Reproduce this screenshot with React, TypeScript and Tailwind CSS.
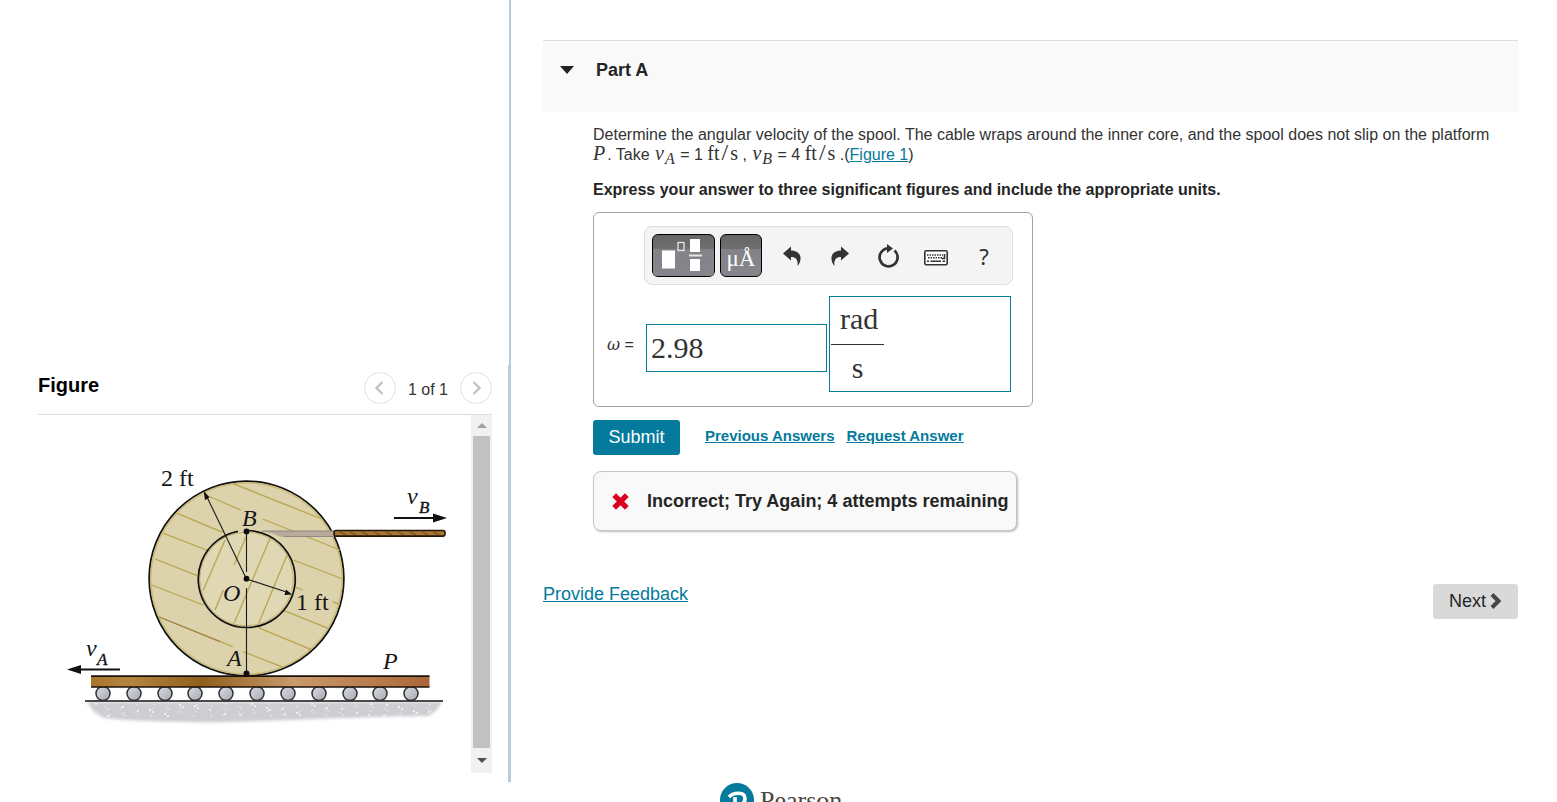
import { useState } from 'react';
import type { ReactNode } from 'react';

const hatchOuter = [
  [280, 86, 545, 192], [205, 123, 302, 165], [112, 175, 248, 232], [70, 235, 208, 288],
  [45, 312, 172, 362], [35, 390, 190, 450], [58, 486, 278, 575], [368, 192, 600, 285],
  [460, 315, 608, 372], [578, 440, 600, 448], [468, 397, 488, 405], [432, 467, 565, 520],
  [355, 518, 512, 583], [310, 590, 430, 637],
];

const hatchInner = [
  [255, 255, 190, 405], [318, 245, 282, 330], [392, 245, 283, 503],
  [442, 298, 357, 503], [250, 405, 225, 465],
];

const wheels = [103, 134, 165, 195, 226, 257, 288, 319, 350, 380, 411];

const specks = Array.from({ length: 110 }, (_, i) => [
  96 + ((i * 73) % 336),
  704 + ((i * 5 + Math.floor(i / 7) * 3) % 13),
  i % 3 === 0 ? 1.1 : 0.7,
]);

function SpoolFigure() {
  return (
    <svg viewBox="38 415 433 358" className="w-full" role="img" aria-label="Spool on a moving platform">
      <defs>
        <linearGradient id="wood" x1="0" x2="1" y1="0" y2="0">
          <stop offset="0" stopColor="#a9752f" />
          <stop offset="0.12" stopColor="#b5853f" />
          <stop offset="0.33" stopColor="#8f5f1c" />
          <stop offset="0.6" stopColor="#c99a6c" />
          <stop offset="0.85" stopColor="#b87a4b" />
          <stop offset="1" stopColor="#a9653a" />
        </linearGradient>
        <linearGradient id="wheel" x1="0" x2="1" y1="0" y2="1">
          <stop offset="0" stopColor="#d9dce1" />
          <stop offset="1" stopColor="#a7abb2" />
        </linearGradient>
        <filter id="soft" x="-5%" y="-20%" width="110%" height="140%">
          <feGaussianBlur stdDeviation="1.6" />
        </filter>
      </defs>

      <path d="M87 702H442L436 711L428 716C380 716 300 720 230 722C170 723 120 720 104 718L94 712Z" fill="#cdced2" filter="url(#soft)" />
      <rect x="80" y="694" width="370" height="7" fill="#fff" />
      {specks.map(([x, y, r], i) => <circle key={i} cx={x} cy={y} r={r} fill="#f7f7f8" />)}
      <path d="M85 701H443" stroke="#111" strokeWidth="1.6" />
      {wheels.map((x) => (
        <circle key={x} cx={x} cy="693.5" r="7" fill="url(#wheel)" stroke="#2f3136" strokeWidth="1.5" />
      ))}

      <circle cx="246.5" cy="578.5" r="97.4" fill="#dcd2ab" stroke="#111" strokeWidth="1.7" />
      <circle cx="246.5" cy="578.5" r="95.6" fill="none" stroke="#c9bb77" strokeWidth="1.4" />
      <circle cx="246.5" cy="579" r="48.5" fill="#e0d7b5" />
      <circle cx="246.5" cy="579" r="46.8" fill="none" stroke="#c0b26c" strokeWidth="1" />
      <g transform="translate(140 455) scale(0.33333)" stroke="#b9a64f" strokeWidth="4">
        {[...hatchOuter, ...hatchInner].map(([a, b, c, d]) => (
          <path key={`${a}-${b}`} d={`M${a} ${b}L${c} ${d}`} />
        ))}
      </g>
      <path d="M58 486L240 560" transform="translate(140 455) scale(0.33333)" stroke="#a5854f" strokeWidth="4" />

      <path d="M262 531H334V537H281C275 534 268 532 262 531Z" fill="#b9ab9b" />
      <path d="M262 531H334M284 536.5H334" stroke="#8e8a83" strokeWidth="1" fill="none" />
      <path d="M238 531.3A48.5 48.5 0 1 0 246.5 530.5" fill="none" stroke="#111" strokeWidth="1.7" />
      <rect x="334" y="530.5" width="111" height="5.6" rx="2" fill="#a87634" stroke="#24170a" strokeWidth="1.6" />
      <path d="M340 532L346 535M350 532L356 535M362 532L368 535M374 532L380 535M386 532L392 535M398 532L404 535M410 532L416 535M422 532L428 535M433 532L439 535" stroke="#6b451a" strokeWidth="1" />

      <rect x="91" y="676" width="338.5" height="11" fill="url(#wood)" />
      <path d="M91 676.2H429.5M91 687H429.5" stroke="#1c120a" strokeWidth="1.7" />

      <path d="M246.5 531V572M246.5 588V673M246.5 579L206 495M246.5 579L288 592.5" stroke="#1a1a1a" strokeWidth="1.1" />
      <path d="M203.500 490.500L209.500 497.500L205 500ZM292 594.500L284.500 595L286 589.500Z" fill="#111" />
      <circle cx="246.500" cy="531.500" r="2.900" fill="#0c0c0c" />
      <circle cx="246.500" cy="578.700" r="2.900" fill="#0c0c0c" />
      <circle cx="246.500" cy="673.500" r="3" fill="#0c0c0c" />

      <path d="M120 669.500H78M394 518H436" stroke="#111" strokeWidth="2" />
      <path d="M67 669.500L81 665V674ZM447 518L433 513.500V522.500Z" fill="#111" />

      <g fill="#151515" fontFamily="Liberation Serif, serif" fontSize="24">
        <text x="161" y="486">2 ft</text>
        <text x="296" y="610">1 ft</text>
        <g fontStyle="italic">
          <text x="242" y="526">B</text>
          <text x="223" y="601">O</text>
          <text x="227" y="666">A</text>
          <text x="383" y="669">P</text>
          <text x="407" y="504">v</text>
          <text x="86" y="656">v</text>
          <g fontSize="17" stroke="#151515" strokeWidth="0.4">
            <text x="419" y="513">B</text>
            <text x="97" y="665">A</text>
          </g>
        </g>
      </g>
    </svg>
  );
}

function RoundButton({ label, path }: { label: string; path: string }) {
  return (
    <button aria-label={label} className="flex size-8 items-center justify-center rounded-full border border-[#e3e3e3] bg-white">
      <svg viewBox="0 0 16 16" className="size-4" fill="none" stroke="#c3c3c3" strokeWidth="2.4">
        <path d={path} />
      </svg>
    </button>
  );
}

function FigurePanel() {
  return (
    <section className="flex min-h-0 flex-1 flex-col border-r-3 border-[#b6cbdc] pr-4 pb-[9px] pl-[38px]">
      <header className="flex h-[50px] shrink-0 items-center justify-between border-b border-[#ddd]">
        <h2 className="pb-[10px] text-[20px] leading-6 font-bold text-black">Figure</h2>
        <div className="flex items-center gap-3 pb-[3px]">
          <RoundButton label="Previous figure" path="M10.500 2L4.500 8L10.500 14" />
          <span className="pt-1 text-base leading-5">1 of 1</span>
          <RoundButton label="Next figure" path="M5.500 2L11.500 8L5.500 14" />
        </div>
      </header>
      <div className="flex min-h-0 flex-1">
        <div className="min-w-0 flex-1 overflow-hidden">
          <SpoolFigure />
        </div>
        <div className="flex w-[21px] shrink-0 flex-col bg-[#f1f1f1] px-[2px]">
          <button aria-label="Scroll up" className="flex h-[21px] items-center justify-center">
            <svg viewBox="0 0 10 5" className="h-[5px] w-[10px]"><path d="M0 5L5 0L10 5Z" fill="#a0a0a0" /></svg>
          </button>
          <div className="flex-1 bg-[#c1c1c1]" />
          <button aria-label="Scroll down" className="flex h-[25px] items-center justify-center">
            <svg viewBox="0 0 10 5" className="h-[5px] w-[10px]"><path d="M0 0H10L5 5Z" fill="#4f4f4f" /></svg>
          </button>
        </div>
      </div>
    </section>
  );
}

function ToolIcon({ label, children }: { label: string; children: ReactNode }) {
  return (
    <button aria-label={label} className="flex h-[43px] w-12 items-center justify-center text-[#333]">
      {children}
    </button>
  );
}

function Toolbar() {
  const dark = 'flex h-[43px] items-center justify-center rounded-md border border-black bg-linear-to-b from-[#666] from-0% via-[#6f6f6f] via-34% to-[#77777b] to-100%';
  return (
    <div role="toolbar" aria-label="Answer tools" className="ml-[50px] flex h-[59px] w-[369px] items-center rounded-lg border border-[#ddd] bg-[#f4f4f4] pl-[7px]">
      <button aria-label="Templates" className={`${dark} w-[63px]`}>
        <svg viewBox="0 0 61 41" className="h-[41px] w-[61px]">
          <rect y="14" width="61" height="27" fill="#8f8f98" opacity=".6" />
          <rect x="9" y="15.500" width="13" height="18" fill="#fff" />
          <rect x="25" y="7.500" width="6" height="8" fill="none" stroke="#e8e8e8" strokeWidth="1.300" />
          <rect x="37" y="4" width="10" height="13" fill="#fff" />
          <rect x="36" y="19.500" width="13" height="2" fill="#e6e6e6" />
          <rect x="37" y="24" width="10" height="12" fill="#fff" />
        </svg>
      </button>
      <button aria-label="Units" className={`${dark} ml-[5px] w-[42px] overflow-hidden`}>
        <span className="flex h-full w-full flex-col bg-linear-to-b from-transparent from-34% to-[#8f8f98]/60 to-34% pt-2 text-center font-['Liberation_Serif',serif] text-[23px] leading-8 text-white">μÅ</span>
      </button>
      <div className="ml-[6px] flex">
        <ToolIcon label="Undo">
          <svg viewBox="0 0 18 20" className="h-5 w-[18px]" fill="currentColor">
            <path d="M0 7.500L8 .5V4.500C14.500 4.500 18 8.500 17.500 13C17.300 16 16 18.500 14.500 20C15.300 14.500 13.500 11 8 11V14.500Z" />
          </svg>
        </ToolIcon>
        <ToolIcon label="Redo">
          <svg viewBox="0 0 18 20" className="h-5 w-[18px]" fill="currentColor">
            <path d="M18 7.500L10 .5V4.500C3.500 4.500 0 8.500 .5 13C.7 16 2 18.500 3.500 20C2.700 14.500 4.500 11 10 11V14.500Z" />
          </svg>
        </ToolIcon>
        <ToolIcon label="Reset">
          <svg viewBox="0 0 22 24" className="h-6 w-[22px]">
            <path d="M11.500 4.300A9 9 0 1 0 17.500 6.500" fill="none" stroke="currentColor" strokeWidth="2.700" />
            <path d="M10 0L16 4.500L10 9Z" fill="currentColor" />
          </svg>
        </ToolIcon>
        <ToolIcon label="Keyboard shortcuts">
          <svg viewBox="0 0 24 16" className="mt-1 h-4 w-6">
            <rect x=".8" y=".8" width="22.400" height="14" rx="1.500" fill="#fff" stroke="currentColor" strokeWidth="1.600" />
            <path d="M3 5H19M4 7.800H19" stroke="currentColor" strokeWidth="1.500" strokeDasharray="1.500 1" />
            <path d="M20.500 4V8.500H17.500M3 11.300H5M6.500 11.300H17M18.500 11.300H21" stroke="currentColor" strokeWidth="1.600" fill="none" />
          </svg>
        </ToolIcon>
        <ToolIcon label="Help"><span className="font-['Noto_Sans',sans-serif] text-[22px] leading-6">?</span></ToolIcon>
      </div>
    </div>
  );
}

function AnswerBox() {
  const [value, setValue] = useState('2.98');
  const [top, setTop] = useState('rad');
  const [bottom, setBottom] = useState('s');
  return (
    <div className="mt-3 h-[195px] w-[440px] rounded-md border border-[#a2a2a2] pt-[13px]">
      <Toolbar />
      <div className="mt-[11px] flex items-end pl-[13px] font-['Liberation_Serif',serif] text-[30px] text-[#333]">
        <label htmlFor="omega" className="mb-[37px] w-[39px] font-['Liberation_Sans',Arial,sans-serif] text-base leading-5">
          <i className="font-['DejaVu_Serif',serif]">ω</i> =
        </label>
        <input id="omega" value={value} onChange={(e) => setValue(e.target.value)} className="mb-5 h-12 w-[181px] border border-[#047a9c] px-1 outline-none" />
        <div role="group" aria-label="Units" className="ml-[2px] flex h-24 w-[182px] flex-col border border-[#047a9c] pl-px">
          <input aria-label="Unit numerator" value={top} onChange={(e) => setTop(e.target.value)} className="h-[47px] w-[53px] pb-1 pl-[9px] outline-none" />
          <div className="h-px w-[53px] bg-[#333]" />
          <input aria-label="Unit denominator" value={bottom} onChange={(e) => setBottom(e.target.value)} className="h-[46px] w-[53px] text-center outline-none" />
        </div>
      </div>
    </div>
  );
}

function Rate({ sub, value }: { sub: string; value: string }) {
  return (
    <>
      <span className="mx-px font-['Liberation_Serif',serif] text-[20px] leading-0 italic">v<span className="inline-block translate-y-1 pl-px text-[16px] leading-0">{sub}</span></span>
      {' '}= {value}{' '}
      <span className="font-['Liberation_Serif',serif] text-[20px] leading-0">ft<span className="px-[2px] text-[24px] leading-0">/</span>s</span>
    </>
  );
}

export default function App() {
  return (
    <div className="flex h-screen flex-col overflow-hidden bg-white font-['Liberation_Sans',Arial,sans-serif] text-[#333]">
      <div className="flex min-h-0 flex-1">
        <aside className="flex w-[511px] shrink-0 flex-col">
          <div className="h-[365px] shrink-0 border-r-2 border-[#b6cbdc]" />
          <FigurePanel />
        </aside>
        <main className="min-w-0 flex-1 pt-10 pr-[39px] pl-8">
          <header className="flex h-[72px] items-start border-t border-[#ddd] bg-[#f9f9f9] pt-[17px] pl-[17px]">
            <button aria-label="Collapse Part A" className="flex h-6 w-9 items-center">
              <svg viewBox="0 0 14 8" className="h-2 w-[14px]"><path d="M0 0H14L7 8Z" fill="#222" /></svg>
            </button>
            <h1 className="text-[18px] leading-6 font-bold text-[#252525]">Part A</h1>
          </header>
          <section className="pt-[13px] pl-[50px]">
            <p className="max-w-[908px] text-base leading-5">
              Determine the angular velocity of the spool. The cable wraps around the inner core, and the spool does not slip on the platform{' '}
              <span className="pr-[2px] font-['Liberation_Serif',serif] text-[20px] leading-0 italic">P</span>. Take <Rate sub="A" value="1" /> , <Rate sub="B" value="4" /> .(<a href="#figure" className="text-[#047a9c] underline">Figure 1</a>)
            </p>
            <p className="mt-[15px] text-base leading-5 font-bold text-[#252525]">
              Express your answer to three significant figures and include the appropriate units.
            </p>
            <AnswerBox />
            <div className="mt-[13px] flex items-center">
              <button className="h-[35px] w-[87px] rounded-[3px] bg-[#047a9c] text-[18px] text-white">Submit</button>
              <div className="ml-[25px] flex gap-3 pb-[3px] text-[15px] leading-5 font-bold text-[#047a9c] underline">
                <a href="#previous">Previous Answers</a>
                <a href="#request">Request Answer</a>
              </div>
            </div>
            <div role="status" className="mt-4 flex h-[60px] w-fit items-center rounded-lg border border-[#c7c7c7] bg-[#f9f9f9] pr-2 pl-[17px] shadow-[1px_1px_2px_#bbb]">
              <svg viewBox="0 0 18 18" className="mr-[17px] size-[19px]"><path d="M3 3L15 15M15 3L3 15" stroke="#db0020" strokeWidth="5" /></svg>
              <strong className="text-[18px] leading-6 text-[#252525]">Incorrect; Try Again; 4 attempts remaining</strong>
            </div>
          </section>
          <div className="mt-[53px] flex items-start justify-between">
            <a href="#feedback" className="text-[18px] leading-5 text-[#047a9c] underline">Provide Feedback</a>
            <button className="flex h-[35px] w-[85px] items-center justify-center gap-1 rounded-[3px] bg-[#d9d9d9] pb-px text-[18px] text-[#252525]">
              Next
              <svg viewBox="0 0 12 16" className="h-4 w-3"><path d="M2 1.500L8.500 8L2 14.500" fill="none" stroke="#444" strokeWidth="4" /></svg>
            </button>
          </div>
        </main>
      </div>
      <footer className="flex h-5 shrink-0 items-start gap-[6px] pl-[720px]">
        <svg viewBox="0 0 34 34" className="mt-px size-[34px]" role="img" aria-label="Pearson logo">
          <circle cx="17" cy="17" r="17" fill="#047a9c" />
          <path d="M9 14C13 9.500 25 8 25 15.500C25 20 21 22.500 17 22.500M15 14V28" fill="none" stroke="#fff" strokeWidth="3.600" />
        </svg>
        <span className="pt-1 font-['Liberation_Serif',serif] text-[26px] leading-[30px] text-[#4a4540]">Pearson</span>
      </footer>
    </div>
  );
}
